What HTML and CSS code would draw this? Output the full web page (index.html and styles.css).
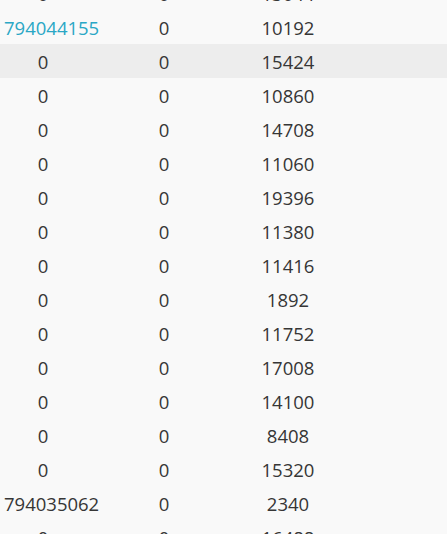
FILE: index.html
```html
<!DOCTYPE html>
<html>
<head>
<meta charset="utf-8">
<link rel="stylesheet" href="styles.css">
</head>
<body>
<div class="table">
  <div class="row"><div class="cell c1">0</div><div class="cell c2">0</div><div class="cell c3">13044</div></div>
  <div class="row"><div class="cell c1 link">794044155</div><div class="cell c2">0</div><div class="cell c3">10192</div></div>
  <div class="row hover"><div class="cell c1">0</div><div class="cell c2">0</div><div class="cell c3">15424</div></div>
  <div class="row"><div class="cell c1">0</div><div class="cell c2">0</div><div class="cell c3">10860</div></div>
  <div class="row"><div class="cell c1">0</div><div class="cell c2">0</div><div class="cell c3">14708</div></div>
  <div class="row"><div class="cell c1">0</div><div class="cell c2">0</div><div class="cell c3">11060</div></div>
  <div class="row"><div class="cell c1">0</div><div class="cell c2">0</div><div class="cell c3">19396</div></div>
  <div class="row"><div class="cell c1">0</div><div class="cell c2">0</div><div class="cell c3">11380</div></div>
  <div class="row"><div class="cell c1">0</div><div class="cell c2">0</div><div class="cell c3">11416</div></div>
  <div class="row"><div class="cell c1">0</div><div class="cell c2">0</div><div class="cell c3">1892</div></div>
  <div class="row"><div class="cell c1">0</div><div class="cell c2">0</div><div class="cell c3">11752</div></div>
  <div class="row"><div class="cell c1">0</div><div class="cell c2">0</div><div class="cell c3">17008</div></div>
  <div class="row"><div class="cell c1">0</div><div class="cell c2">0</div><div class="cell c3">14100</div></div>
  <div class="row"><div class="cell c1">0</div><div class="cell c2">0</div><div class="cell c3">8408</div></div>
  <div class="row"><div class="cell c1">0</div><div class="cell c2">0</div><div class="cell c3">15320</div></div>
  <div class="row"><div class="cell c1">794035062</div><div class="cell c2">0</div><div class="cell c3">2340</div></div>
  <div class="row"><div class="cell c1">0</div><div class="cell c2">0</div><div class="cell c3">16488</div></div>
</div>
</body>
</html>
```
FILE: styles.css
```css
html, body {
  margin: 0;
  padding: 0;
  background: #f9f9f9;
  overflow: hidden;
}
body {
  font-family: "Open Sans", "Noto Sans", sans-serif;
  font-size: 18.5px;
  color: #363636;
}
.table {
  margin-top: -24px;
}
.row {
  display: grid;
  grid-template-columns: 86px 156px 92px 1fr;
  height: 34px;
  line-height: 34px;
}
.row.hover {
  background: #ededed;
}
.cell {
  text-align: center;
  white-space: nowrap;
  box-sizing: border-box;
  min-width: 0;
  padding-top: 1px;
}
.c1 {
  padding-left: 4px;
  padding-right: 4px;
}
.link {
  color: #2aa7c5;
}
```
